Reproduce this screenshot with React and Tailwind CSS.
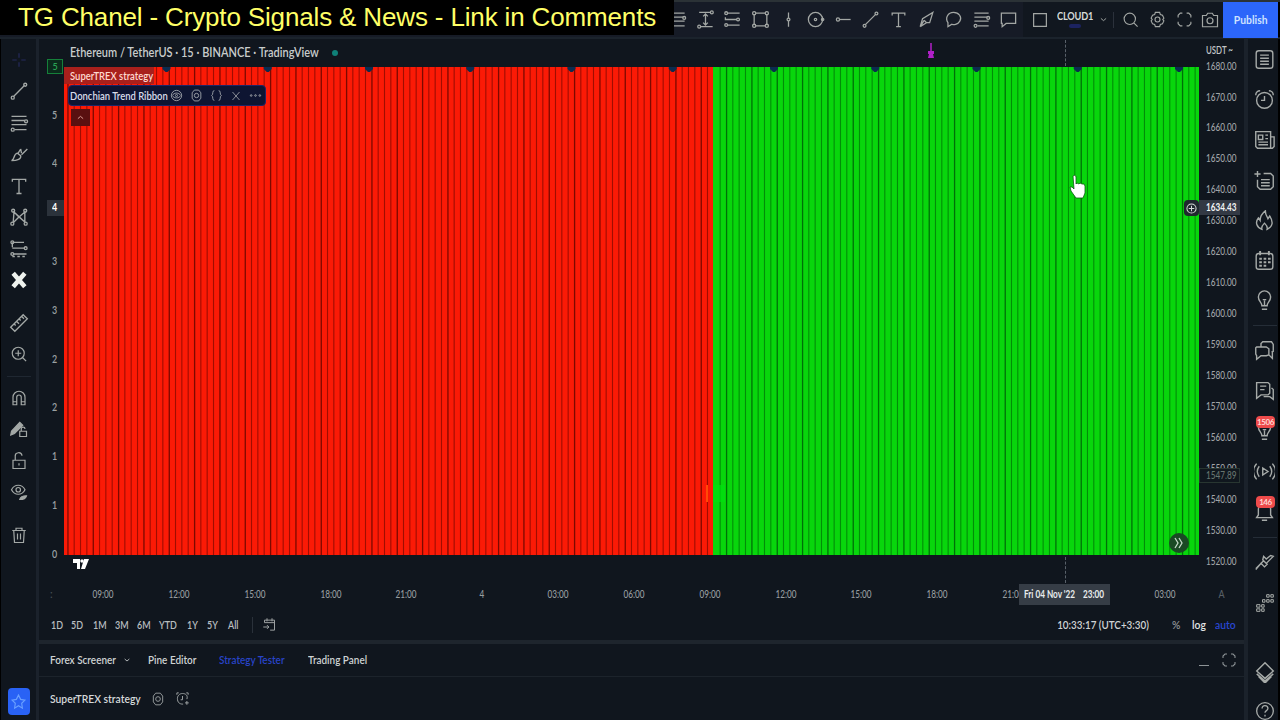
import React from 'react';
import clsx from 'clsx';

const ICONS = {
  cross: <path d="M12 3v6M12 15v6M3 12h6M15 12h6" />,
  trend: (
    <>
      <path d="M5.5 18.5l13-13" />
      <circle cx="4.5" cy="20" r="1.8" />
      <circle cx="19.5" cy="4.5" r="1.8" />
    </>
  ),
  fib: (
    <>
      <path d="M3 4h18M3 9h16M3 14h18M7 20h14" />
      <circle cx="20.5" cy="10" r="1.8" />
      <circle cx="4.5" cy="20" r="1.8" />
    </>
  ),
  brush: <path d="M3 20c4-1 2-8 7-9l4 3c1 4-4 6-11 6zM11 11l3-5M15 13l7-7M14 6l1 5" />,
  text: <path d="M4 7V4h16v3M12 4v17M9 21h6" />,
  pattern: (
    <>
      <path d="M5 19L6 6l6 6 7-6v12l-7-6-7 7M6 6l13 12" />
      <circle cx="5" cy="4.5" r="1.8" />
      <circle cx="19.5" cy="4.5" r="1.8" />
      <circle cx="4" cy="20" r="1.8" />
      <circle cx="20" cy="20" r="1.8" />
    </>
  ),
  forecast: (
    <>
      <path d="M4 4h14M4 11h14M6 18h15M4 6v4M4 21h3M10 21h3M16 21h3" />
      <circle cx="4" cy="4" r="1.7" />
      <circle cx="20" cy="11" r="1.7" />
      <circle cx="4" cy="18" r="1.7" />
    </>
  ),
  close: <path d="M5 4l14 16M19 4L5 20" strokeWidth="5.5" />,
  ruler: <path d="M2 17L17 2l5 5L7 22zM6 13l2 2M9 10l3 3M12 7l2 2M15 4l3 3" />,
  zoom: <path d="M11 3a8 8 0 1 0 0 16 8 8 0 0 0 0-16zM17 17l4.500 4.500M11 7v8M7 11h8" />,
  plus: <path d="M12 2a10 10 0 1 0 0 20 10 10 0 0 0 0-20zM12 6v12M6 12h12" strokeWidth="2.200" />,
  magnet: <path d="M4 21V11a8 8 0 0 1 16 0v10h-5V11a3 3 0 0 0-6 0v10zM4 17h5M15 17h5" />,
  penLock: (
    <>
      <path d="M2 15L13 3l4 4L6 18l-5 2z" fill="currentColor" />
      <path d="M13 15h9v7h-9zM15 15v-3a2.500 2.500 0 0 1 5 0" />
    </>
  ),
  unlock: <path d="M4 11h16v11H4zM7 11V6a4.500 4.500 0 0 1 9-1M12 15v3" />,
  eyePen: (
    <>
      <path d="M2 9c4-8 14-8 18 0-4 8-14 8-18 0z" />
      <circle cx="11" cy="9" r="3" />
      <path d="M13 22c1-4 4-5 9-5-1 4-4 5-9 5z" fill="currentColor" />
    </>
  ),
  trash: <path d="M3 6h18M8 6V3h8v3M5 6l1 16h12l1-16M10 10v8M14 10v8" />,
  star: <path d="M12 3l3 6 6 1-4.500 4.500 1 7L12 18l-5.500 3.500 1-7L3 10l6-1z" />,
  measure: (
    <>
      <path d="M4 3h14M12 5v14M6 21h15M9 8l3-3 3 3M9 16l3 3 3-3" />
      <circle cx="20" cy="3" r="1.8" />
      <circle cx="4" cy="21" r="1.8" />
    </>
  ),
  channel: (
    <>
      <path d="M5 4h16M3 9v3h14M5 19h16" />
      <circle cx="4" cy="4" r="1.8" />
      <circle cx="19" cy="12" r="1.8" />
      <circle cx="4" cy="19" r="1.8" />
    </>
  ),
  rect: (
    <>
      <path d="M6 4h12M6 20h12M4 6v12M20 6v12" />
      <circle cx="4" cy="4" r="2" />
      <circle cx="20" cy="4" r="2" />
      <circle cx="4" cy="20" r="2" />
      <circle cx="20" cy="20" r="2" />
    </>
  ),
  vline: (
    <>
      <path d="M12 3v7M12 14v7" />
      <circle cx="12" cy="12" r="1.8" />
    </>
  ),
  circle: (
    <>
      <circle cx="12" cy="12" r="9" />
      <circle cx="12" cy="12" r="1.500" />
      <circle cx="21" cy="12" r="1.500" />
    </>
  ),
  ray: (
    <>
      <path d="M7 12h14" />
      <circle cx="5" cy="12" r="2" />
    </>
  ),
  arrow: <path d="M4 21l3-10L20 3l-4 13-4 0-3-3M4 21l5-8M4 21l8-5" />,
  bubble: <path d="M5 21v-5C1 10 5 3 12 3s11 6 8 11-8 5-10 4z" />,
  comment: <path d="M3 4h18v13H9l-5 4v-4H3z" />,
  square: <path d="M3.500 3.500h17v17h-17z" />,
  search: <path d="M11 3a8 8 0 1 0 0 16 8 8 0 0 0 0-16zM17 17l5 5" />,
  gear: (
    <>
      <path d="M9 2h6l1 3 3 1 2 4-1.500 2L21 14l-2 4-3 1-1 3H9l-1-3-3-1-2-4 1.500-2L3 10l2-4 3-1z" />
      <circle cx="12" cy="12" r="3.500" />
    </>
  ),
  settings: (
    <>
      <path d="M8 2h8l4 5v10l-4 5H8l-4-5V7z" />
      <circle cx="12" cy="12" r="4" />
    </>
  ),
  full: <path d="M9 3H6L3 6v3M15 3h3l3 3v3M9 21H6l-3-3v-3M15 21h3l3-3v-3" />,
  camera: (
    <>
      <path d="M2 6h5l2-3h6l2 3h5v15H2z" />
      <circle cx="12" cy="13" r="4" />
    </>
  ),
  list: (
    <>
      <rect x="2.500" y="2" width="19" height="20" rx="3" />
      <path d="M7 7h10M7 10.500h10M7 14h10M7 17.500h10" />
    </>
  ),
  alarm: (
    <>
      <circle cx="12" cy="13" r="9" />
      <path d="M12 8v5H8M2 7c0-3 2-5 5-5M22 7c0-3-2-5-5-5" />
    </>
  ),
  news: <path d="M2 3h17v19H4l-2-2zM19 9h4v11l-2 2h-2M5 7h5v5H5zM13 7h3M13 11h3M5 15h11M5 18h11" />,
  addList: <path d="M4 1v7M0.500 4.500h7M11 4h8l3 3v12l-3 3H7l-3-3v-8M8 11h10M8 14.500h10M8 18h10" />,
  fire: <path d="M9 22c-6-2-8-8-4-13l2 3c0-4 2-8 6-11 0 5 2 6 3 9l2-3c4 6 4 12-3 15 1-3-1-5-3-7-2 2-4 4-3 7z" />,
  calendar: (
    <>
      <rect x="2.500" y="4" width="19" height="18" rx="3" />
      <path d="M7 1v5M17 1v5M6 10h3M11 10h3M16 10h3M6 14h3M11 14h3M16 14h3M6 18h3M11 18h3" strokeWidth="2.200" />
    </>
  ),
  bulb: <path d="M9 18c0-4-4-5-4-10a7 7 0 0 1 14 0c0 5-4 6-4 10zM9 22h6M12 18v-6M10 11h4" />,
  chats: <path d="M8 7V4l2-2h10l2 3v8l-2 1M3 8h11l3 2v7l-3 1H8l-5 4v-4l-1-2v-7zM17 17l4 4v-7" />,
  chatText: <path d="M3 3h13l2 2v10l-2 2H8l-5 4zM7 7h7M7 11h5M20 9l2 2v11l-4-3h-7" />,
  stream: <path d="M10 8v8l6-4zM6 6c-3 4-3 8 0 12M3 3c-5 6-5 12 0 18M18 6c3 4 3 8 0 12M21 3c5 6 5 12 0 18" />,
  bell: <path d="M3 19h18l-2-3V9a7 7 0 0 0-14 0v7zM9 22h6" />,
  flow: <path d="M2 20l6-7 4 4 3-3-4-4-9 9M10 9l4 4 8-8-3-1-5 4-3-3z" />,
  dom: <path d="M2 14h4v3H2zM2 19h4v3H2zM8 14h3v3H8zM8 19h3v3H8zM9 8h3v3H9zM14 8h3v3h-3zM14 2h3v3h-3zM19 2h3v3h-3zM19 8h3v3h-3z" strokeWidth="1.200" />,
  layers: <path d="M12 2l9 9-9 8-9-8zM3 14l9 8 9-8M5 17l7 7 7-7" />,
  help: (
    <>
      <circle cx="12" cy="12" r="10" />
      <path d="M8.500 9c0-5 7-4 7 0 0 2.500-3.500 2.500-3.500 5M12 16.500v2" />
    </>
  ),
  eye: (
    <>
      <circle cx="12" cy="12" r="9.500" />
      <path d="M4 12c4-6 12-6 16 0-4 6-12 6-16 0z" />
      <circle cx="12" cy="12" r="2" />
    </>
  ),
  braces: <path d="M8 3C3 3 7 10 3 12c4 2 0 9 5 9M16 3c5 0 1 7 5 9-4 2 0 9-5 9" />,
  x: <path d="M5 4l14 16M19 4L5 20" />,
  dots: (
    <>
      <circle cx="4" cy="12" r="1.500" />
      <circle cx="12" cy="12" r="1.500" />
      <circle cx="20" cy="12" r="1.500" />
    </>
  ),
  goto: <path d="M4 9V5h16v16h-7M8 2v5M16 2v5M4 9h16M2 16h9M8 13l3 3-3 3" />,
  alarmAdd: <path d="M19 13c2-6-2-9-7-9s-9 4-8 10 5 7 9 7M12 8v6h-3M3 6V3h3M21 6V3h-3M19 16v6M16 19h6" />,
  down: <path d="M5 9l7 6 7-6" strokeWidth="2.500" />,
  up: <path d="M5 15l7-6 7 6" strokeWidth="2.500" />,
};

function Icon({ name, size = 20, className }) {
  return (
    <svg
      width={size}
      height={size}
      viewBox="0 0 24 24"
      fill="none"
      stroke="currentColor"
      strokeWidth="1.6"
      className={clsx('shrink-0', className)}
    >
      {ICONS[name]}
    </svg>
  );
}

const drawTools = ['cross', 'trend', 'fib', 'brush', 'text', 'pattern', 'forecast', 'close'];
const lockTools = ['magnet', 'penLock', 'unlock', 'eyePen'];

const favTools = [
  'fib', 'measure', 'channel', 'rect', 'vline', 'circle', 'ray', 'trend', 'text', 'arrow', 'bubble', 'fib', 'comment',
];

const widgets = ['list', 'alarm', 'news', 'addList', 'fire', 'calendar', 'bulb'];
const social = [
  { icon: 'chats' },
  { icon: 'chatText' },
  { icon: 'bulb', badge: '1506' },
  { icon: 'stream' },
  { icon: 'bell', badge: '146' },
];

const prices = Array.from({ length: 17 }, (_, i) => (1680 - i * 10).toFixed(2));
const leftScale = ['5', '4', '', '3', '3', '2', '2', '1', '1', '0'];
const hours = ['09:00', '12:00', '15:00', '18:00', '21:00', '4', '03:00', '06:00', '09:00', '12:00', '15:00', '18:00', '21:00', '', '03:00'];
const ranges = [
  ['1D', 'w-[20px]'], ['5D', 'w-[22px]'], ['1M', 'w-[22px]'], ['3M', 'w-[22px]'], ['6M', 'w-[22px]'],
  ['YTD', 'w-[28px]'], ['1Y', 'w-[20px]'], ['5Y', 'w-[21px]'], ['All', 'w-[24px]'],
];

const BAR = 6.333;
const FLIP = 649;
const bars = Array.from({ length: 179 }, (_, i) => ({ x: 3.3 + i * BAR, strong: i % 4 === 0 }));

function Ribbon() {
  return (
    <svg width="1135" height="488" className="block">
      <rect width={FLIP} height="488" fill="#fb1a06" />
      <rect x={FLIP} width={1135 - FLIP} height="488" fill="#08d60c" />
      {bars.map(({ x, strong }) => {
        const red = x < FLIP;
        if (Math.abs(x - FLIP) < 3) return null;
        return (
          <rect
            key={x}
            x={x}
            width={strong ? 1.3 : 1.1}
            height="488"
            fill={red ? '#750800' : '#006a08'}
            opacity={strong ? 0.95 : 0.68}
          />
        );
      })}
      <rect x="642" y="418" width="2" height="17" fill="#ff4a08" />
      <rect x="649" y="418" width="12" height="17" fill="#00e010" opacity="0.7" />
      {Array.from({ length: 11 }, (_, i) => (
        <path key={i} d="M-4 0h8v3l-3 3h-2l-3-3z" transform={`translate(${102.5 + i * 101.25} -1)`} fill="#0b2c50" />
      ))}
    </svg>
  );
}

function LeftToolbar() {
  return (
    <div className="flex w-[38px] shrink-0 flex-col items-center border-r-[3px] border-[#1b222c] pt-[5px] text-[#a3a8a6]">
      {drawTools.map((t) => (
        <div key={t} className="flex h-[31.500px] items-center">
          <Icon
            name={t}
            size={t === 'cross' ? 18 : 20}
            className={clsx(t === 'cross' && 'text-[#252a5c]', t === 'close' && 'text-[#eef2ee]')}
          />
        </div>
      ))}
      <div className="mt-[11px] flex h-[31.500px] items-center"><Icon name="ruler" /></div>
      <div className="flex h-[31.500px] items-center"><Icon name="zoom" size={18} /></div>
      <div className="mt-[6px] mb-[5px] h-px w-6 shrink-0 bg-[#1f2731]" />
      {lockTools.map((t) => (
        <div key={t} className="flex h-[31.500px] items-center"><Icon name={t} size={18} /></div>
      ))}
      <div className="mt-[11px] flex h-[31.500px] items-center"><Icon name="trash" size={18} /></div>
      <div className="mt-[137px] flex h-[27px] w-[22px] shrink-0 items-center justify-center rounded-sm bg-[#2962f5] text-[#6aa0ff]">
        <Icon name="star" size={17} />
      </div>
    </div>
  );
}

function RightToolbar() {
  return (
    <div className="flex w-[34px] shrink-0 flex-col items-center overflow-hidden border-l-4 border-[#1b222b] pl-[3px] text-[#a6aaa8]">
      {widgets.map((t) => (
        <div key={t} className="flex h-[40.300px] shrink-0 items-center"><Icon name={t} size={21} /></div>
      ))}
      <div className="mt-[4px] mb-[4px] h-px w-6 shrink-0 bg-[#252d37]" />
      {social.map(({ icon, badge }) => (
        <div key={icon} className="relative flex h-[40.300px] shrink-0 items-center">
          <Icon name={icon} size={21} />
          {badge && (
            <span className="absolute top-[5px] left-[2px] flex h-[12px] w-[19px] items-center justify-center rounded-sm bg-[#ee4b4b] text-[8px] font-bold tracking-tighter text-[#ffd9d5]">
              {badge}
            </span>
          )}
        </div>
      ))}
      <div className="mt-[5px] mb-[5px] h-px w-6 shrink-0 bg-[#252d37]" />
      <div className="flex h-[40px] shrink-0 items-center"><Icon name="flow" size={21} /></div>
      <div className="flex h-[40px] shrink-0 items-center"><Icon name="dom" size={20} /></div>
      <div className="mt-[29px] flex h-[40px] shrink-0 items-center"><Icon name="layers" size={22} /></div>
      <div className="flex h-[38px] shrink-0 items-center"><Icon name="help" size={20} /></div>
    </div>
  );
}

function TopBar() {
  return (
    <div className="flex h-[39px] shrink-0 items-center border-t-2 border-b-2 border-t-[#2b3236] border-b-[#1b232c] bg-[#161b26] pl-[664px] text-[#a3a7a4]">
      <div className="flex">
        {favTools.map((t, i) => (
          <div key={i} className="flex w-[27.600px] justify-center"><Icon name={t} size={19} /></div>
        ))}
      </div>
      <div className="flex h-full flex-1 items-center bg-[#11171f]">
        <Icon name="square" size={18} className="ml-[8px]" />
        <div className="ml-[8px] w-[36px] pb-[8px] text-[11.500px] leading-4 font-bold whitespace-nowrap text-[#d6dbd8]">
          <span className="inline-block origin-left scale-x-[0.800] tracking-[-0.200px]">CLOUD1</span>
          <div className="mx-auto -mb-1 h-1 w-3 rounded-full bg-[#1c2360]" />
        </div>
        <Icon name="down" size={9} className="ml-[6px]" />
        <div className="ml-[5px] h-4 w-px bg-[#2b313b]" />
        <Icon name="search" size={17} className="ml-[8px]" />
        <Icon name="gear" size={17} className="ml-[10px]" />
        <Icon name="full" size={17} className="ml-[10px]" />
        <Icon name="camera" size={18} className="ml-[8px]" />
      </div>
      <div className="flex h-[36px] w-[55px] items-center justify-center bg-[#2c66fa] text-[11.500px] font-bold text-[#cfe2ff]">
        <span className="scale-x-90">Publish</span>
      </div>
      <div className="h-full w-[2px] bg-black" />
    </div>
  );
}

function Legend() {
  return (
    <div className="absolute top-0 left-0 text-[11px] leading-none whitespace-nowrap text-[#f2f1f1]">
      <div className="flex h-[17px] w-[90px] items-center bg-[#a8201c] pl-[6px] font-semibold text-[#ffd9d0]">
        <span className="origin-left scale-x-[0.860]">SuperTREX strategy</span>
      </div>
      <div className="mt-px ml-[4px] flex h-[21px] w-[198px] items-center rounded-sm border border-[#1d2568] bg-[#0e1532] pl-px font-semibold text-[#d8dcea]">
        <span className="w-[98px] origin-left scale-x-[0.860]">Donchian Trend Ribbon</span>
        <span className="flex items-center gap-[7px] pl-[2px] text-[#a7abb0]">
          <Icon name="eye" size={13} />
          <Icon name="settings" size={13} />
          <Icon name="braces" size={13} />
          <Icon name="x" size={12} />
          <Icon name="dots" size={13} />
        </span>
      </div>
      <div className="mt-[3px] ml-[7px] flex h-[17px] w-[19px] items-center justify-center bg-[#5a1010] text-[#e0a49c]">
        <Icon name="up" size={9} />
      </div>
    </div>
  );
}

function PriceAxis() {
  return (
    <div className="relative flex w-[45px] shrink-0 flex-col text-[10.500px] font-medium text-[#a0a5a8]">
      <div className="h-[12px] pt-[3px] pl-[7px] leading-4 font-semibold text-[#c0c4c6]">
        <span className="inline-block origin-left scale-x-[0.750] whitespace-nowrap">USDT ~</span>
      </div>
      {prices.map((p) => (
        <div key={p} className="flex h-[30.940px] shrink-0 items-center pl-[7px]">
          <span className="origin-left scale-x-[0.780]">{p}</span>
        </div>
      ))}
      <div className="absolute top-[161px] left-0 flex h-[15px] w-[41px] items-center bg-[#333944] pl-[7px] font-bold text-[#f1f3f4]">
        <span className="origin-left scale-x-[0.780]">1634.43</span>
      </div>
      <div className="absolute top-[161px] -left-[15px] flex h-[16px] w-[15px] items-center justify-center rounded-sm bg-[#20272f] text-[#d5dad8]">
        <Icon name="plus" size={11} />
      </div>
      <div className="absolute top-[429px] left-0 flex h-[15px] w-[41px] items-center border border-[#283631] bg-[#10171e] pl-[6px] text-[#67756f]">
        <span className="origin-left scale-x-[0.780]">1547.89</span>
      </div>
    </div>
  );
}

function Chart() {
  return (
    <div className="relative flex h-[541px] shrink-0">
      <div className="relative flex w-[25px] shrink-0 flex-col pt-[52px] text-[10.500px] font-semibold text-[#9ba1a3]">
        {leftScale.map((v, i) => (
          <div key={i} className="flex h-[48.800px] shrink-0 items-center pl-[13px]">
            <span className="origin-left scale-x-[0.850]">{v}</span>
          </div>
        ))}
        <div className="absolute top-[20px] left-[8px] flex h-[15px] w-[16px] items-center justify-center border border-[#15803a] bg-[#0b2b1c] text-[9px] text-[#2aa556]">
          5
        </div>
        <div className="absolute top-[161px] left-[8px] flex h-[16px] w-[17px] items-center bg-[#2b323b] pl-[5px] font-bold text-white">
          <span className="origin-left scale-x-[0.850]">4</span>
        </div>
      </div>
      <div className="flex w-[1135px] shrink-0 flex-col">
        <div className="flex h-[28px] items-center pl-[6px] text-[12.500px] font-semibold text-[#c9cdcc]">
          <span className="w-[260px] origin-left scale-x-[0.880] whitespace-nowrap">Ethereum / TetherUS · 15 · BINANCE · TradingView</span>
          <span className="ml-[2px] h-[6px] w-[6px] rounded-sm bg-[#0f8078]" />
        </div>
        <div className="relative h-[488px]">
          <Ribbon />
          <Legend />
          <svg width="8" height="17" viewBox="0 0 8 17" className="absolute -top-[24px] left-[863px]">
            <path d="M4 0v13" stroke="#b020c8" strokeWidth="1.500" />
            <path d="M1 8h6v3H6l1 4H1l1-4H1z" fill="#b020c8" />
          </svg>
          <div className="absolute -top-[27px] left-[1000.500px] h-[26px] border-l border-dashed border-[#59616a]" />
          <div className="absolute top-[490px] left-[1000.500px] h-[26px] border-l border-dashed border-[#59616a]" />
          <svg width="20" height="26" viewBox="0 0 20 26" className="absolute top-[107px] left-[1004px]">
            <path
              d="M5 2c1-1 3-1 3 1v7l1-1 2 1 1-1 2 1 2 0 1 2v7l-2 5H8l-5-7-1-4 2 0 2 2z"
              fill="#fff"
              stroke="#0a5a10"
              strokeWidth="0.800"
            />
          </svg>
          <div className="absolute top-[466px] left-[1105px] flex h-[20px] w-[20px] items-center justify-center rounded-full bg-[#1a4a24] text-[#c3d8c6]">
            <svg width="10" height="12" viewBox="0 0 10 12" fill="none" stroke="currentColor" strokeWidth="1.300">
              <path d="M1 1l3 5-3 5M5 1l3 5-3 5" />
            </svg>
          </div>
          <svg width="16" height="10" viewBox="0 0 16 10" className="absolute top-[492px] left-[9px]">
            <path d="M0 0h7v10H4V4H0zM11 0h5l-4 10H8z" fill="#fff" />
            <circle cx="9" cy="2" r="1.700" fill="#fff" />
          </svg>
        </div>
      </div>
      <PriceAxis />
    </div>
  );
}

function TimeAxis() {
  return (
    <div className="relative flex h-[29px] shrink-0 items-center pl-[9px] text-[10.500px] font-medium text-[#979da0]">
      <span className="w-[17px] pl-[2px] text-[#4a5157]">:</span>
      {hours.map((h, i) => (
        <span key={i} className="w-[75.850px] shrink-0 scale-x-[0.780] text-center">{h}</span>
      ))}
      <div className="absolute top-[4px] left-[980px] flex h-[21px] w-[91px] items-center bg-[#363d46] pl-[5px] font-bold whitespace-nowrap text-[#e8ebec]">
        <span className="w-[59px] origin-left scale-x-[0.780]">Fri 04 Nov '22</span>
        <span className="origin-left scale-x-[0.780]">23:00</span>
      </div>
      <span className="absolute top-[7px] left-[1179px] scale-x-[0.850] text-[#596067]">A</span>
    </div>
  );
}

export default function App() {
  return (
    <div className="relative flex h-[720px] w-[1280px] flex-col overflow-hidden bg-[#10161e] [font-family:Lato,'Open_Sans',sans-serif]">
      <TopBar />
      <div className="flex min-h-0 flex-1 border-r-2 border-l border-black">
        <LeftToolbar />
        <div className="flex min-w-0 flex-1 flex-col">
          <Chart />
          <TimeAxis />
          <div className="flex h-[31px] shrink-0 items-center pl-[12px] text-[11.500px] font-semibold text-[#b9bec0]">
            {ranges.map(([r, w]) => (
              <span key={r} className={w}>
                <span className="inline-block origin-left scale-x-[0.780]">{r}</span>
              </span>
            ))}
            <span className="mr-[9px] h-4 w-px bg-[#2a313a]" />
            <Icon name="goto" size={15} className="text-[#9ca1a2]" />
            <span className="mr-[23px] ml-auto origin-right scale-x-[0.820] text-[12px] text-[#d0d4d5]">10:33:17 (UTC+3:30)</span>
            <span className="w-[20px] origin-left scale-x-90 text-[#8d9396]">%</span>
            <span className="w-[23px] origin-left scale-x-90 text-[#e0e3e4]">log</span>
            <span className="w-[29px] origin-left scale-x-90 text-[#2946d2]">auto</span>
          </div>
          <div className="h-[4px] shrink-0 bg-[#1e252d]" />
          <div className="flex h-[33px] shrink-0 items-center border-b border-[#1c232b] pl-[11px] text-[12px] font-semibold whitespace-nowrap text-[#ced2d3]">
            <span className="w-[73px] origin-left scale-x-[0.830]">Forex Screener</span>
            <Icon name="down" size={8} />
            <span className="ml-[17px] w-[71px] origin-left scale-x-[0.830]">Pine Editor</span>
            <span className="w-[89px] origin-left scale-x-[0.830] text-[#2844c8]">Strategy Tester</span>
            <span className="origin-left scale-x-[0.830]">Trading Panel</span>
            <span className="mt-[11px] mr-[12px] ml-auto h-[1.500px] w-[10px] bg-[#8d9396]" />
            <Icon name="full" size={16} className="mr-[7px] text-[#8d9396]" />
          </div>
          <div className="flex flex-1 items-center pl-[11px] text-[12px] font-semibold whitespace-nowrap text-[#d5d9da]">
            <span className="w-[101px] origin-left scale-x-[0.860]">SuperTREX strategy</span>
            <Icon name="settings" size={14} className="text-[#9a9fa0]" />
            <Icon name="alarmAdd" size={15} className="ml-[10px] text-[#9a9fa0]" />
          </div>
        </div>
        <RightToolbar />
      </div>
      <div className="absolute top-0 left-0 flex h-[35px] w-[674px] items-center bg-black pl-[18px] text-[26px] tracking-[-0.150px] whitespace-nowrap text-[#ffff66] [font-family:'Liberation_Sans',sans-serif]">
        TG Chanel - Crypto Signals &amp; News - Link in Comments
      </div>
    </div>
  );
}
